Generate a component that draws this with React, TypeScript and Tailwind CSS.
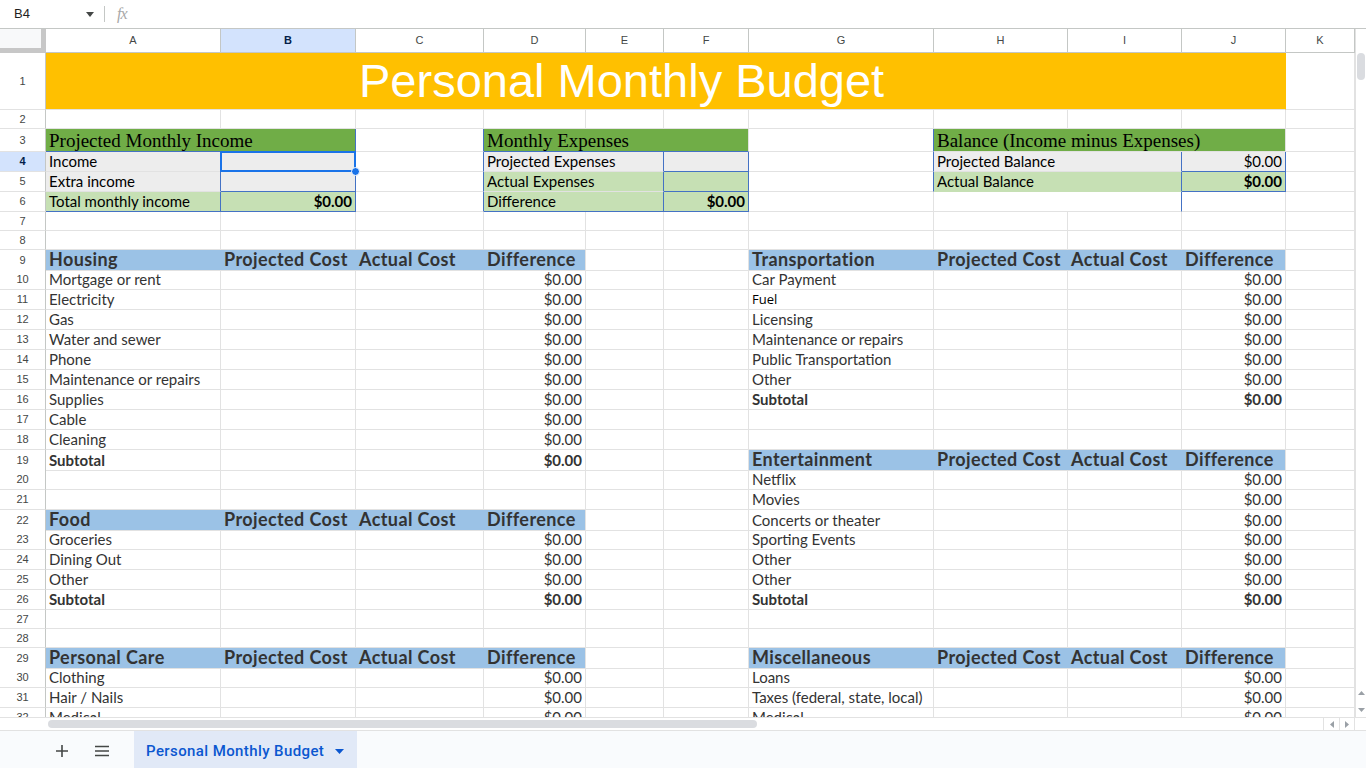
import React from "react";

type C = { t?: React.ReactNode; s?: number; k?: string };

const COLS =
  "grid grid-cols-[46px_175px_135px_128px_102px_78px_85px_185px_134px_114px_104px_69px]";
const SPAN = ["", "col-span-1", "col-span-2", "col-span-3", "col-span-4", "col-span-5", "col-span-6", "col-span-7", "col-span-8", "col-span-9", "col-span-10"];

const HDR = "bg-[#9bc2e6] font-bold text-[18px] leading-[19px] tracking-[0.4px] text-[#3b3b3b] border-r-[#9bc2e6] pb-0 overflow-visible";
const HDR_END = "bg-[#9bc2e6] font-bold text-[18px] leading-[19px] tracking-[0.4px] text-[#3b3b3b] pb-0 overflow-visible";
const GREEN = "bg-[#70ad47] font-['Liberation_Serif',serif] text-[19px] leading-[22px] text-black pt-[2px] pb-0";

const hdr = (name: string): C[] => [
  { t: name, k: HDR },
  { t: "Projected Cost", k: HDR },
  { t: "Actual Cost", k: HDR },
  { t: "Difference", k: HDR_END },
];
const item = (label: React.ReactNode): C[] => [{ t: label }, {}, {}, { t: "$0.00", k: "justify-end" }];
const sub = (): C[] => [
  { t: "Subtotal", k: "font-bold" },
  {},
  {},
  { t: "$0.00", k: "justify-end font-bold" },
];
const none = (): C[] => [{}, {}, {}, {}];
const row = (l: C[], r: C[]): C[] => [...l, {}, {}, ...r, {}];

const fuel = <span className="font-['Open_Sans',sans-serif] text-[13px] text-black">Fuel</span>;

function Cell({ c }: { c: C }) {
  const clip = c.k?.includes("overflow-visible") ? "" : "overflow-hidden";
  return (
    <div
      className={`relative flex items-center whitespace-nowrap px-[3px] pb-[1px] border-r border-b border-[#e2e2e2] font-['Lato',sans-serif] text-[15px] leading-[18px] text-[#333] ${clip} ${SPAN[c.s ?? 1]} ${c.k ?? ""}`}
    >
      {c.t}
    </div>
  );
}

function Row({ n, h, cells, sel }: { n: number; h: string; cells: C[]; sel?: boolean }) {
  return (
    <div className={`${COLS} ${h} shrink-0`}>
      <div
        className={`flex items-center justify-center border-r border-b border-r-[#c4c7c5] border-b-[#e2e2e2] font-['Liberation_Sans',sans-serif] text-[11px] ${
          sel ? "bg-[#d3e3fd] font-bold text-[#041e49]" : "bg-white text-[#444746]"
        }`}
      >
        {n}
      </div>
      {cells.map((c, i) => (
        <Cell key={i} c={c} />
      ))}
    </div>
  );
}

const selBox = (
  <>
    <div className="absolute left-[-1px] top-[-1px] w-[136px] h-[21px] border-2 border-[#1a73e8]" />
    <div className="absolute right-[-5px] bottom-[-5px] w-[9px] h-[9px] rounded-full bg-[#1a73e8] border border-white" />
  </>
);

export default function App() {
  const wide = "border-r-[#4472c4]";
  const rows: { h: string; cells: C[] }[] = [
    {
      h: "h-[57px]",
      cells: [
        {
          t: "Personal Monthly Budget",
          s: 10,
          k: "bg-[#ffc000] pl-[313px] pb-0 font-['Liberation_Sans',sans-serif] text-[47px] leading-[54px] text-white border-r-[#ffc000]",
        },
        {},
      ],
    },
    { h: "h-[19px]", cells: Array.from({ length: 11 }, () => ({})) },
    {
      h: "h-[23px]",
      cells: [
        { t: "Projected Monthly Income", s: 2, k: `${GREEN} ${wide} border-b-[#4472c4]` },
        { k: wide },
        { t: "Monthly Expenses", s: 3, k: `${GREEN} border-b-[#4472c4]` },
        { k: wide },
        { t: "Balance (Income minus Expenses)", s: 3, k: GREEN },
        {},
      ],
    },
    {
      h: "h-[20px]",
      cells: [
        { t: "Income", k: `bg-[#ededed] text-black ${wide}` },
        { t: selBox, k: `bg-[#ededed] overflow-visible z-10 ${wide} border-b-[#4472c4]` },
        { k: wide },
        { t: "Projected Expenses", s: 2, k: `bg-[#ededed] text-black ${wide}` },
        { k: `bg-[#ededed] ${wide} border-b-[#4472c4]` },
        { k: wide },
        { t: "Projected Balance", s: 2, k: `bg-[#ededed] text-black ${wide}` },
        { t: "$0.00", k: `bg-[#ededed] text-black justify-end ${wide} border-b-[#4472c4]` },
        {},
      ],
    },
    {
      h: "h-[20px]",
      cells: [
        { t: "Extra income", k: `bg-[#ededed] text-black ${wide}` },
        { k: `bg-[#ededed] ${wide} border-b-[#4472c4]` },
        { k: wide },
        { t: "Actual Expenses", s: 2, k: `bg-[#c6e0b4] text-black ${wide}` },
        { k: `bg-[#c6e0b4] ${wide} border-b-[#4472c4]` },
        { k: wide },
        { t: "Actual Balance", s: 2, k: `bg-[#c6e0b4] text-black ${wide} border-b-[#c6e0b4]` },
        { t: "$0.00", k: `bg-[#c6e0b4] text-black font-bold justify-end ${wide} border-b-[#4472c4]` },
        {},
      ],
    },
    {
      h: "h-[20px]",
      cells: [
        { t: "Total monthly income", k: `bg-[#c6e0b4] text-black ${wide} border-b-[#4472c4]` },
        { t: "$0.00", k: `bg-[#c6e0b4] text-black font-bold justify-end ${wide} border-b-[#4472c4]` },
        { k: wide },
        { t: "Difference", s: 2, k: `bg-[#c6e0b4] text-black ${wide} border-b-[#4472c4]` },
        { t: "$0.00", k: `bg-[#c6e0b4] text-black font-bold justify-end ${wide} border-b-[#4472c4]` },
        {},
        { s: 2, k: wide },
        {},
        {},
      ],
    },
    { h: "h-[19px]", cells: row(none(), none()) },
    { h: "h-[19px]", cells: row(none(), none()) },
    { h: "h-[20px]", cells: row(hdr("Housing"), hdr("Transportation")) },
    { h: "h-[20px]", cells: row(item("Mortgage or rent"), item("Car Payment")) },
    { h: "h-[20px]", cells: row(item("Electricity"), item(fuel)) },
    { h: "h-[20px]", cells: row(item("Gas"), item("Licensing")) },
    { h: "h-[20px]", cells: row(item("Water and sewer"), item("Maintenance or repairs")) },
    { h: "h-[20px]", cells: row(item("Phone"), item("Public Transportation")) },
    { h: "h-[20px]", cells: row(item("Maintenance or repairs"), item("Other")) },
    { h: "h-[20px]", cells: row(item("Supplies"), sub()) },
    { h: "h-[20px]", cells: row(item("Cable"), none()) },
    { h: "h-[20px]", cells: row(item("Cleaning"), none()) },
    { h: "h-[20px]", cells: row(sub(), hdr("Entertainment")) },
    { h: "h-[20px]", cells: row(none(), item("Netflix")) },
    { h: "h-[20px]", cells: row(none(), item("Movies")) },
    { h: "h-[20px]", cells: row(hdr("Food"), item("Concerts or theater")) },
    { h: "h-[20px]", cells: row(item("Groceries"), item("Sporting Events")) },
    { h: "h-[20px]", cells: row(item("Dining Out"), item("Other")) },
    { h: "h-[20px]", cells: row(item("Other"), item("Other")) },
    { h: "h-[20px]", cells: row(sub(), sub()) },
    { h: "h-[19px]", cells: row(none(), none()) },
    { h: "h-[19px]", cells: row(none(), none()) },
    { h: "h-[20px]", cells: row(hdr("Personal Care"), hdr("Miscellaneous")) },
    { h: "h-[20px]", cells: row(item("Clothing"), item("Loans")) },
    { h: "h-[20px]", cells: row(item("Hair / Nails"), item("Taxes (federal, state, local)")) },
    { h: "h-[20px]", cells: row(item("Medical"), item("Medical")) },
  ];

  const letters = ["A", "B", "C", "D", "E", "F", "G", "H", "I", "J", "K"];

  return (
    <div className="w-[1366px] h-[768px] overflow-hidden bg-white flex flex-col font-['Liberation_Sans',sans-serif]">
      {/* formula bar */}
      <div className="h-[29px] shrink-0 flex items-center border-b border-[#c4c7c5]">
        <div className="w-[104px] flex items-center pl-[14px] pr-[10px] justify-between text-[13px] text-[#1f1f1f]">
          <span>B4</span>
          <svg width="8" height="5" viewBox="0 0 8 5">
            <path d="M0 0h8L4 5z" fill="#444746" />
          </svg>
        </div>
        <div className="w-px h-[16px] bg-[#c4c7c5]" />
        <span className="ml-[12px] font-['Liberation_Serif',serif] italic text-[16px] text-[#a8a8a8] tracking-[-1px]">
          fx
        </span>
      </div>

      <div className="flex h-[688px] shrink-0">
        <div className="w-[1355px] flex flex-col overflow-hidden">
          {/* column header */}
          <div className={`${COLS} h-[24px] shrink-0`}>
            <div className="bg-[#f8f9fa] border-r-[5px] border-b-[5px] border-[#c7c7c7]" />
            {letters.map((l) => (
              <div
                key={l}
                className={`flex items-center justify-center border-r border-b border-[#c4c7c5] text-[11px] ${
                  l === "B" ? "bg-[#d3e3fd] font-bold text-[#041e49]" : "bg-white text-[#444746]"
                }`}
              >
                {l}
              </div>
            ))}
          </div>
          {rows.map((r, i) => (
            <Row key={i} n={i + 1} h={r.h} cells={r.cells} sel={i === 3} />
          ))}
        </div>
        {/* vertical scrollbar */}
        <div className="w-[11px] flex flex-col items-center border-l border-[#e2e2e2] pt-[24px]">
          <div className="w-[8px] h-[27px] rounded-full bg-[#dadce0]" />
          <div className="flex-1" />
          <svg width="7" height="4" viewBox="0 0 7 4" className="mb-[13px]">
            <path d="M0 4h7L3.5 0z" fill="#9aa0a6" />
          </svg>
          <svg width="7" height="4" viewBox="0 0 7 4" className="mb-[5px]">
            <path d="M0 0h7L3.5 4z" fill="#9aa0a6" />
          </svg>
        </div>
      </div>

      {/* horizontal scrollbar */}
      <div className="h-[14px] shrink-0 flex border-t border-b border-[#e2e2e2]">
        <div className="w-[1323px] flex items-center pl-[48px]">
          <div className="w-[709px] h-[8px] rounded-full bg-[#dadce0]" />
        </div>
        <div className="w-[16px] flex items-center justify-center border-l border-[#e2e2e2]">
          <svg width="4" height="7" viewBox="0 0 4 7">
            <path d="M4 0v7L0 3.5z" fill="#9aa0a6" />
          </svg>
        </div>
        <div className="w-[16px] flex items-center justify-center border-l border-r border-[#e2e2e2]">
          <svg width="4" height="7" viewBox="0 0 4 7">
            <path d="M0 0v7L4 3.5z" fill="#9aa0a6" />
          </svg>
        </div>
      </div>

      {/* sheet tabs */}
      <div className="flex-1 flex bg-[#f9fbfd]">
        <div className="w-[134px] flex items-center pt-[3px]">
          <svg width="14" height="14" viewBox="0 0 14 14" className="ml-[55px]">
            <path d="M7 1v12M1 7h12" stroke="#444746" strokeWidth="1.6" />
          </svg>
          <svg width="16" height="12" viewBox="0 0 16 12" className="ml-[25px]">
            <path d="M1 1.5h14M1 6h14M1 10.5h14" stroke="#444746" strokeWidth="1.6" />
          </svg>
        </div>
        <div className="w-[223px] bg-[#e1e9f7] flex items-center pl-[12px] pt-[3px] gap-[11px]">
          <span className="font-['Roboto',sans-serif] font-medium text-[15px] tracking-[0.4px] text-[#0b57d0]">
            Personal Monthly Budget
          </span>
          <svg width="9" height="5" viewBox="0 0 9 5">
            <path d="M0 0h9L4.5 5z" fill="#0b57d0" />
          </svg>
        </div>
      </div>
    </div>
  );
}
